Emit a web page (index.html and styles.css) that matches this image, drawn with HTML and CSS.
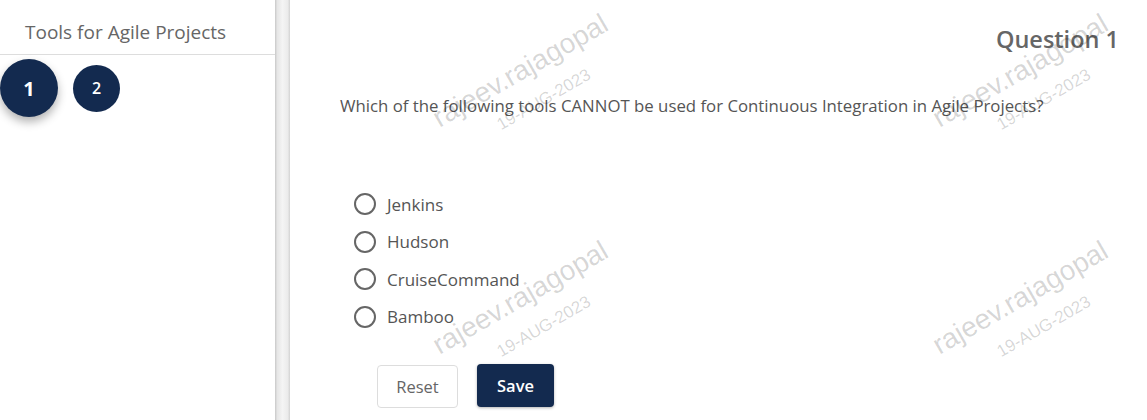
FILE: index.html
```html
<!DOCTYPE html>
<html>
<head>
<meta charset="utf-8">
<link rel="stylesheet" href="styles.css">
</head>
<body>
<div class="app">
  <aside class="sidebar">
    <div class="side-title">Tools for Agile Projects</div>
    <div class="nav">
      <div class="qnum active">1</div>
      <div class="qnum">2</div>
    </div>
  </aside>
  <div class="divider"></div>
  <main class="main">
    <h1 class="qtitle">Question 1</h1>
    <p class="qtext">Which of the following tools CANNOT be used for Continuous Integration in Agile Projects?</p>
    <div class="options">
      <label class="opt"><span class="radio"></span>Jenkins</label>
      <label class="opt"><span class="radio"></span>Hudson</label>
      <label class="opt"><span class="radio"></span>CruiseCommand</label>
      <label class="opt"><span class="radio"></span>Bamboo</label>
    </div>
    <div class="actions">
      <button class="btn reset">Reset</button>
      <button class="btn save">Save</button>
    </div>
    <div class="wm w1"><div class="wm-name">rajeev.rajagopal</div><div class="wm-date">19-AUG-2023</div></div>
    <div class="wm w2"><div class="wm-name">rajeev.rajagopal</div><div class="wm-date">19-AUG-2023</div></div>
    <div class="wm w3"><div class="wm-name">rajeev.rajagopal</div><div class="wm-date">19-AUG-2023</div></div>
    <div class="wm w4"><div class="wm-name">rajeev.rajagopal</div><div class="wm-date">19-AUG-2023</div></div>
  </main>
</div>
</body>
</html>
```
FILE: styles.css
```css
* { box-sizing: border-box; }
html, body { margin: 0; padding: 0; background: #fff; }
body {
  font-family: "Open Sans", "Noto Sans", sans-serif;
  color: #555;
  width: 1147px;
  height: 420px;
  overflow: hidden;
}
.app { display: flex; height: 420px; }
.sidebar { width: 275px; flex: none; }
.side-title {
  height: 55px;
  border-bottom: 1px solid #ddd;
  font-size: 19px;
  color: #666;
  padding: 19px 0 0 25px;
  line-height: 26px;
}
.nav { display: flex; align-items: center; gap: 15px; padding: 4px 0 0 0; }
.qnum {
  width: 47px; height: 47px; border-radius: 50%;
  background: #132a4f; color: #fff;
  display: flex; align-items: center; justify-content: center;
  font-size: 16px; font-weight: 600;
}
.qnum.active {
  width: 58px; height: 58px; font-size: 20px; font-weight: 700;
  box-shadow: 0 5px 10px rgba(0,0,0,0.3);
}
.divider {
  width: 15px; flex: none;
  background: linear-gradient(to right, #c8c8c8 0%, #e6e6e6 15%, #f4f4f4 50%, #ebebeb 85%, #d2d2d2 100%);
}
.main { flex: 1; position: relative; padding: 0 28px 0 50px; }
.qtitle {
  margin: 0; text-align: right;
  font-size: 23.5px; font-weight: 600; color: #666;
  padding-top: 23px; line-height: 32px;
}
.qtext { margin: 39px 0 0 0; font-size: 16.8px; line-height: 24px; color: #555; }
.options { margin-top: 75px; padding-left: 14px; display: flex; flex-direction: column; gap: 15px; }
.opt { display: flex; align-items: center; gap: 11px; font-size: 17px; color: #555; height: 22.5px; }
.radio { width: 22px; height: 22px; border: 2px solid #666; border-radius: 50%; flex: none; }
.actions { display: flex; gap: 19px; padding-left: 37px; margin-top: 36px; }
.btn {
  font-family: "Open Sans", sans-serif; font-size: 16.5px; height: 43px;
  border-radius: 4px; cursor: pointer;
}
.reset { width: 81px; background: #fff; border: 1px solid #ddd; color: #666; margin-top: 1px; }
.save { width: 77px; background: #132a4f; border: none; color: #fff; font-weight: 600; box-shadow: 0 1px 3px rgba(0,0,0,0.3); }
.wm {
  position: absolute; pointer-events: none;
  font-family: "Liberation Sans", Arial, sans-serif;
  color: rgba(0,0,0,0.17);
  transform: rotate(-30deg); transform-origin: 0 0;
  line-height: 1;
}
.wm-name { font-size: 28px; }
.wm-date { font-size: 17px; margin: 14px 0 0 52px; }
.w1 { left: 138px; top: 108px; }
.w2 { left: 638px; top: 108px; }
.w3 { left: 138px; top: 335px; }
.w4 { left: 638px; top: 335px; }
```
